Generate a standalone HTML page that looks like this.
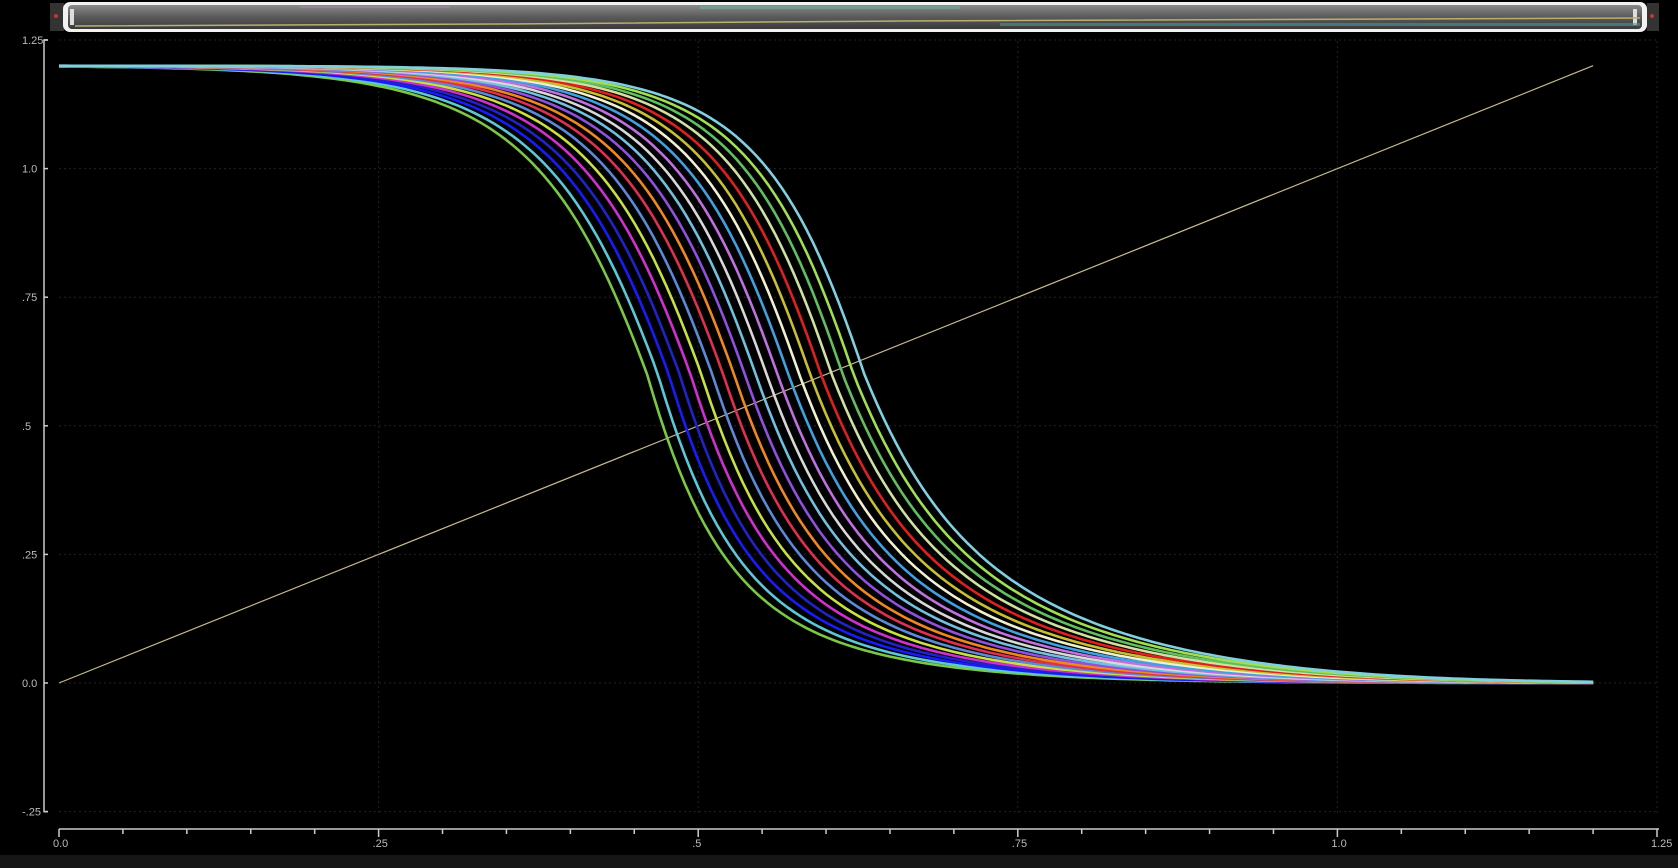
<!DOCTYPE html>
<html><head><meta charset="utf-8"><style>
html,body{margin:0;padding:0;background:#000;width:1678px;height:868px;overflow:hidden}
svg{display:block}
text{font-family:"Liberation Sans",sans-serif;fill:#bbb;font-size:11px}
</style></head><body>
<svg id="s" width="1678" height="868" xmlns="http://www.w3.org/2000/svg">
<rect x="0" y="0" width="1678" height="868" fill="#000"/>
<rect x="0" y="855" width="1678" height="13" fill="#161616"/>
<defs><linearGradient id="g" x1="0" y1="0" x2="0" y2="1">
<stop offset="0" stop-color="#8a8a8a"/><stop offset="0.5" stop-color="#5a5a5a"/><stop offset="1" stop-color="#3a3a3a"/></linearGradient></defs>
<rect x="50" y="3" width="14" height="28" fill="#333"/>
<circle cx="56" cy="16" r="2" fill="#c33"/>
<rect x="1647" y="3" width="12" height="28" fill="#333"/>
<circle cx="1652" cy="16" r="2" fill="#c33"/>
<rect x="63" y="2" width="1584" height="30" rx="7" fill="#f2f2f2"/>
<rect x="68" y="5" width="1574" height="24" rx="4" fill="url(#g)"/>
<rect x="70" y="9" width="4" height="16" fill="#ddd"/>
<rect x="1633" y="9" width="4" height="16" fill="#ddd"/>
<polyline points="75,26 500,24 900,21 1640,18" stroke="#b8b070" stroke-width="1.5" fill="none"/>
<rect x="700" y="6" width="260" height="3" fill="#7a9" opacity="0.6"/>
<rect x="300" y="6" width="150" height="2" fill="#a8a" opacity="0.5"/>
<rect x="1000" y="23" width="640" height="3" fill="#4a9a9a" opacity="0.6"/>
<g id="grid"></g>
<g id="axes" stroke="#ccc" stroke-width="1.5" fill="none"></g>
<g id="labels"></g>
<g id="curves" fill="none" stroke-width="2.6" stroke-linejoin="round"></g>
</svg>
<script>
const NS="http://www.w3.org/2000/svg";
const X=v=>59+v*1278.4, Y=v=>683-v*514.4;
function el(p,t,a,txt){const e=document.createElementNS(NS,t);for(const k in a)e.setAttribute(k,a[k]);if(txt)e.textContent=txt;document.getElementById(p).appendChild(e);}
for(let i=1;i<=5;i++){el('grid','line',{x1:X(i*0.25),x2:X(i*0.25),y1:41,y2:813,stroke:'#222','stroke-dasharray':'2,3'});}
for(let i=-1;i<=5;i++){el('grid','line',{x1:59,x2:1659,y1:Y(i*0.25),y2:Y(i*0.25),stroke:'#222','stroke-dasharray':'2,3'});}
el('axes','polyline',{points:`48,${Y(1.25)} 44,${Y(1.25)} 44,${Y(-0.25)} 48,${Y(-0.25)}`});
for(let i=-1;i<=5;i++){el('axes','line',{x1:44,x2:48,y1:Y(i*0.25),y2:Y(i*0.25)});}
el('axes','polyline',{points:`59,829 1659,829`});
for(let i=0;i<=25;i++){el('axes','line',{x1:X(i*0.05),x2:X(i*0.05),y1:829,y2:i%5==0?837:834});}
const yl=['-.25','0.0','.25','.5','.75','1.0','1.25'];
yl.forEach((t,i)=>el('labels','text',{x:22,y:Y((i-1)*0.25)+4},t));
const xl=['0.0','.25','.5','.75','1.0','1.25'];
xl.forEach((t,i)=>el('labels','text',{x:X(i*0.25)-6,y:847},t));
el('labels','line',{x1:59,y1:Y(0),x2:X(1.2),y2:Y(1.2),stroke:'#c8b890','stroke-width':1.2});
const cols=['#7ac943','#5bc8d8','#1a1aff','#2222cc','#d030d0','#c8e040','#5a8ad8','#e03050','#f08820','#9050e0','#70c0e0','#d8d8d8','#c070e0','#40a0e0','#f0f0d0','#c8c030','#e02020','#d0e0a0','#60c060','#a0e050','#80d0e0'];
const n=cols.length;
for(let k=0;k<n;k++){
 const t=k/(n-1);
 const m=0.46+0.17*t;
 let pts=[];
 for(let x=0;x<=1.2001;x+=0.005){
  const d=x-m; let E;
  if(d<0){E=d/((0.045+0.025*Math.tanh(4*(-d)))*(1-0.1*t));}
  else{E=d/((0.035+0.18*d)*(1+0.4*t))+10*d*d;}
  let v=1.2/(1+Math.exp(E));
  pts.push(X(x).toFixed(1)+','+Y(v).toFixed(1));
 }
 el('curves','polyline',{points:pts.join(' '),stroke:cols[k]});
}
</script>
</body></html>
